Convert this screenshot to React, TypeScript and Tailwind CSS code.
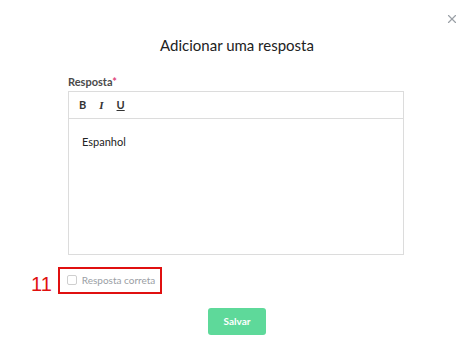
import { X } from 'lucide-react';

export default function App() {
  return (
    <div
      className="w-[474px] h-[360px] bg-white flex flex-col items-center relative"
      style={{ fontFamily: 'Lato, "Noto Sans", sans-serif' }}
    >
      <button className="absolute right-[15px] top-[12px] text-[#9aa0a6]">
        <X size={14} strokeWidth={2} />
      </button>

      <h1 className="mt-[36px] text-[15px] leading-[18px] text-[#222]">Adicionar uma resposta</h1>

      <div className="mt-[21px] w-[336px] self-start ml-[68px]">
        <label className="block text-[11px] leading-[13px] font-bold text-[#4a4a4a]">
          Resposta<span className="text-[#e0457b]">*</span>
        </label>

        <div className="mt-[3px] border border-[#dcdcdc] h-[164px] flex flex-col">
          <div className="h-[27px] border-b border-[#dcdcdc] flex items-center gap-[13px] pl-[10px] text-[11px] text-[#333]">
            <span className="font-bold">B</span>
            <span className="italic font-bold" style={{ fontFamily: '"Liberation Serif", serif' }}>I</span>
            <span className="underline font-bold">U</span>
          </div>
          <div className="pt-[16px] pl-[13px] text-[11px] leading-[13px] text-[#222]">Espanhol</div>
        </div>
      </div>

      <div className="self-start ml-[31px] mt-[11px] flex items-center gap-[6px]">
        <span
          className="text-[20px] leading-[20px] mt-[8px] text-[#e01010]"
          style={{ fontFamily: '"Liberation Sans", sans-serif' }}
        >
          11
        </span>
        <div className="w-[104px] h-[27px] border-2 border-[#e01010] flex items-center pl-[7px] gap-[5px]">
          <span className="w-[10px] h-[10px] border border-[#cfcfcf] rounded-[2px] bg-white" />
          <span className="text-[10px] text-[#9a9ea4]">Resposta correta</span>
        </div>
      </div>

      <button className="mt-[14px] w-[58px] h-[27px] rounded-[3px] bg-[#5ed99a] text-white text-[10px] font-bold">
        Salvar
      </button>
    </div>
  );
}
